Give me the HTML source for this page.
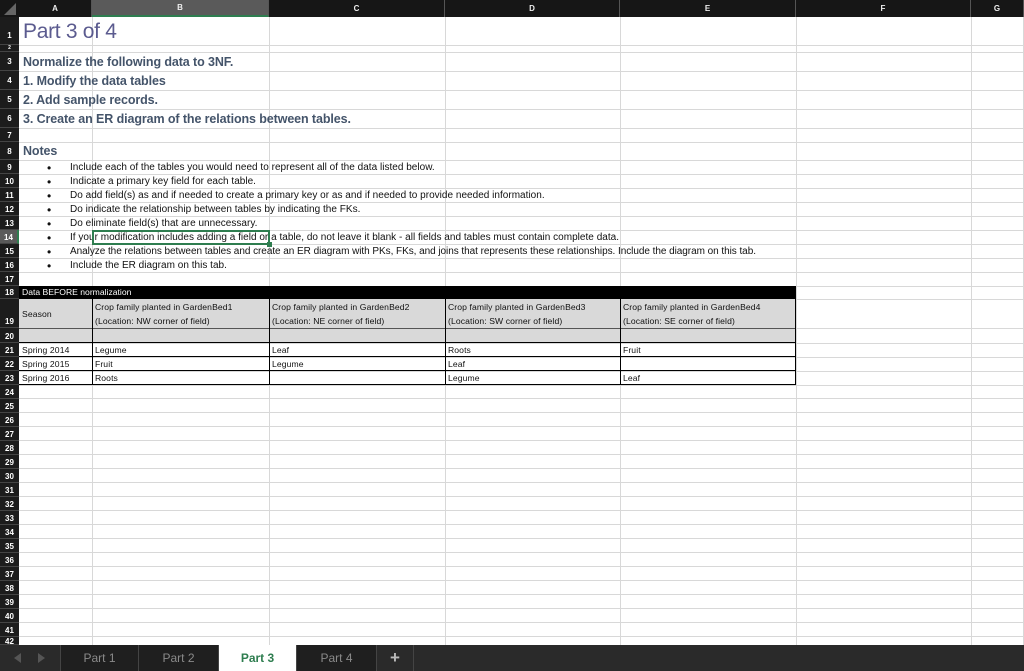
<!DOCTYPE html>
<html><head><meta charset="utf-8"><style>
*{margin:0;padding:0;box-sizing:border-box}
body{width:1024px;height:671px;overflow:hidden;background:#fff;font-family:"Liberation Sans",sans-serif;position:relative}
.a{position:absolute}
.hl{position:absolute;left:19px;width:1005px;height:1px;background:#d8d8d8}
.vl{position:absolute;top:17px;width:1px;height:628px;background:#d8d8d8}
.rn{position:absolute;left:0;width:19px;background:#1c1c1c;color:#fff;font-weight:bold;font-size:8px;text-align:center;border-bottom:1px solid #444;display:flex;align-items:flex-end;justify-content:center;padding-bottom:1px}
.ch{position:absolute;top:0;height:17px;background:#161616;color:#eee;font-size:8px;font-weight:bold;text-align:center;line-height:17px;border-right:1px solid #555}
.h{position:absolute;left:23px;color:#44546a;font-weight:bold;font-size:12.5px;letter-spacing:-0.1px;white-space:nowrap}
.n{position:absolute;left:70px;font-size:10px;letter-spacing:0.02px;color:#111;white-space:nowrap}
.b{position:absolute;left:47px;font-size:12px;line-height:12px;color:#111}
.t{position:absolute;font-size:8.6px;color:#111;white-space:nowrap;letter-spacing:0.1px}
.tab{position:absolute;top:645px;height:26px;line-height:26px;text-align:center;color:#8a8a8a;font-size:12px;border-right:1px solid #444}
</style></head><body>
<div class="vl" style="left:92px"></div><div class="vl" style="left:269px"></div><div class="vl" style="left:445px"></div><div class="vl" style="left:620px"></div><div class="vl" style="left:796px"></div><div class="vl" style="left:971px"></div><div class="vl" style="left:1023px"></div>
<div class="hl" style="top:45px"></div><div class="hl" style="top:52px"></div><div class="hl" style="top:71px"></div><div class="hl" style="top:90px"></div><div class="hl" style="top:109px"></div><div class="hl" style="top:128px"></div><div class="hl" style="top:142px"></div><div class="hl" style="top:160px"></div><div class="hl" style="top:174px"></div><div class="hl" style="top:188px"></div><div class="hl" style="top:202px"></div><div class="hl" style="top:216px"></div><div class="hl" style="top:230px"></div><div class="hl" style="top:244px"></div><div class="hl" style="top:258px"></div><div class="hl" style="top:272px"></div><div class="hl" style="top:286px"></div><div class="hl" style="top:299px"></div><div class="hl" style="top:328px"></div><div class="hl" style="top:343px"></div><div class="hl" style="top:357px"></div><div class="hl" style="top:371px"></div><div class="hl" style="top:385px"></div>
<div class="a" style="left:19px;top:385px;width:1005px;height:260px;background:repeating-linear-gradient(to bottom,transparent 0,transparent 13px,#d8d8d8 13px,#d8d8d8 14px)"></div>
<div class="a" style="left:0;top:0;width:19px;height:17px;background:#161616"><div class="a" style="left:4px;top:3px;width:0;height:0;border-left:12px solid transparent;border-bottom:12px solid #666"></div></div>
<div class="ch" style="left:19px;width:73px">A</div>
<div class="ch" style="left:92px;width:177px;background:#5a5a5a;border-bottom:2px solid #2e7d4f;line-height:16px">B</div>
<div class="ch" style="left:269px;width:176px">C</div>
<div class="ch" style="left:445px;width:175px">D</div>
<div class="ch" style="left:620px;width:176px">E</div>
<div class="ch" style="left:796px;width:175px">F</div>
<div class="ch" style="left:971px;width:53px">G</div>
<div class="rn" style="top:17px;height:28px;padding-bottom:4px">1</div>
<div class="rn" style="top:45px;height:7px;font-size:5px;align-items:flex-start;padding:0">2</div>
<div class="rn" style="top:52px;height:19px;padding-bottom:4px">3</div>
<div class="rn" style="top:71px;height:19px;padding-bottom:4px">4</div>
<div class="rn" style="top:90px;height:19px;padding-bottom:4px">5</div>
<div class="rn" style="top:109px;height:19px;padding-bottom:4px">6</div>
<div class="rn" style="top:128px;height:14px">7</div>
<div class="rn" style="top:142px;height:18px;padding-bottom:3px">8</div>
<div class="rn" style="top:160px;height:14px">9</div>
<div class="rn" style="top:174px;height:14px">10</div>
<div class="rn" style="top:188px;height:14px">11</div>
<div class="rn" style="top:202px;height:14px">12</div>
<div class="rn" style="top:216px;height:14px">13</div>
<div class="rn" style="top:230px;height:14px;background:#5a5a5a;border-right:2px solid #2e7d4f">14</div>
<div class="rn" style="top:244px;height:14px">15</div>
<div class="rn" style="top:258px;height:14px">16</div>
<div class="rn" style="top:272px;height:14px">17</div>
<div class="rn" style="top:286px;height:13px">18</div>
<div class="rn" style="top:299px;height:29px">19</div>
<div class="rn" style="top:328px;height:15px">20</div>
<div class="rn" style="top:343px;height:14px">21</div>
<div class="rn" style="top:357px;height:14px">22</div>
<div class="rn" style="top:371px;height:14px">23</div>
<div class="rn" style="top:385px;height:14px">24</div>
<div class="rn" style="top:399px;height:14px">25</div>
<div class="rn" style="top:413px;height:14px">26</div>
<div class="rn" style="top:427px;height:14px">27</div>
<div class="rn" style="top:441px;height:14px">28</div>
<div class="rn" style="top:455px;height:14px">29</div>
<div class="rn" style="top:469px;height:14px">30</div>
<div class="rn" style="top:483px;height:14px">31</div>
<div class="rn" style="top:497px;height:14px">32</div>
<div class="rn" style="top:511px;height:14px">33</div>
<div class="rn" style="top:525px;height:14px">34</div>
<div class="rn" style="top:539px;height:14px">35</div>
<div class="rn" style="top:553px;height:14px">36</div>
<div class="rn" style="top:567px;height:14px">37</div>
<div class="rn" style="top:581px;height:14px">38</div>
<div class="rn" style="top:595px;height:14px">39</div>
<div class="rn" style="top:609px;height:14px">40</div>
<div class="rn" style="top:623px;height:14px">41</div>
<div class="rn" style="top:637px;height:8px;overflow:hidden;align-items:flex-start;padding:0">42</div>
<div class="a" style="left:23px;top:20px;font-size:21px;color:#5b5b8f;letter-spacing:-0.3px">Part 3 of 4</div>
<div class="h" style="top:55px">Normalize the following data to 3NF.</div>
<div class="h" style="top:74px">1. Modify the data tables</div>
<div class="h" style="top:93px">2. Add sample records.</div>
<div class="h" style="top:112px">3. Create an ER diagram of the relations between tables.</div>
<div class="h" style="top:144px">Notes</div>
<div class="b" style="top:162px">•</div><div class="n" style="top:162px">Include each of the tables you would need to represent all of the data listed below.</div>
<div class="b" style="top:176px">•</div><div class="n" style="top:176px">Indicate a primary key field for each table.</div>
<div class="b" style="top:190px">•</div><div class="n" style="top:190px">Do add field(s) as and if needed to create a primary key or as and if needed to provide needed information.</div>
<div class="b" style="top:204px">•</div><div class="n" style="top:204px">Do indicate the relationship between tables by indicating the FKs.</div>
<div class="b" style="top:218px">•</div><div class="n" style="top:218px">Do eliminate field(s) that are unnecessary.</div>
<div class="b" style="top:232px">•</div><div class="n" style="top:232px">If your modification includes adding a field or a table, do not leave it blank - all fields and tables must contain complete data.</div>
<div class="b" style="top:246px">•</div><div class="n" style="top:246px;letter-spacing:-0.05px">Analyze the relations between tables and create an ER diagram with PKs, FKs, and joins that represents these relationships.  Include the diagram on this tab.</div>
<div class="b" style="top:260px">•</div><div class="n" style="top:260px">Include the ER diagram on this tab.</div>
<div class="a" style="left:92px;top:230px;width:178px;height:15px;border:2px solid #2e7d4f"></div>
<div class="a" style="left:267px;top:242px;width:5px;height:5px;background:#2e7d4f"></div>
<div class="a" style="left:19px;top:286px;width:777px;height:13px;background:#000;color:#fff;font-size:8.6px;line-height:13px;padding-left:3px">Data BEFORE normalization</div>
<div class="a" style="left:19px;top:299px;width:777px;height:44px;background:#d9d9d9"></div>
<div class="a" style="left:19px;top:328px;width:777px;height:1px;background:#555"></div>
<div class="a" style="left:19px;top:342px;width:777px;height:1px;background:#000"></div>
<div class="a" style="left:19px;top:356px;width:777px;height:1px;background:#000"></div>
<div class="a" style="left:19px;top:370px;width:777px;height:1px;background:#000"></div>
<div class="a" style="left:19px;top:384px;width:777px;height:1px;background:#000"></div>
<div class="a" style="left:92px;top:299px;width:1px;height:86px;background:#000"></div>
<div class="a" style="left:269px;top:299px;width:1px;height:86px;background:#000"></div>
<div class="a" style="left:445px;top:299px;width:1px;height:86px;background:#000"></div>
<div class="a" style="left:620px;top:299px;width:1px;height:86px;background:#000"></div>
<div class="a" style="left:795px;top:286px;width:1px;height:99px;background:#000"></div>
<div class="t" style="left:22px;top:309px">Season</div>
<div class="t" style="left:95px;top:302px">Crop family planted in GardenBed1</div><div class="t" style="left:95px;top:316px">(Location: NW corner of field)</div>
<div class="t" style="left:272px;top:302px">Crop family planted in GardenBed2</div><div class="t" style="left:272px;top:316px">(Location: NE corner of field)</div>
<div class="t" style="left:448px;top:302px">Crop family planted in GardenBed3</div><div class="t" style="left:448px;top:316px">(Location: SW corner of field)</div>
<div class="t" style="left:623px;top:302px">Crop family planted in GardenBed4</div><div class="t" style="left:623px;top:316px">(Location: SE corner of field)</div>
<div class="t" style="left:22px;top:345px">Spring 2014</div><div class="t" style="left:95px;top:345px">Legume</div><div class="t" style="left:272px;top:345px">Leaf</div><div class="t" style="left:448px;top:345px">Roots</div><div class="t" style="left:623px;top:345px">Fruit</div>
<div class="t" style="left:22px;top:359px">Spring 2015</div><div class="t" style="left:95px;top:359px">Fruit</div><div class="t" style="left:272px;top:359px">Legume</div><div class="t" style="left:448px;top:359px">Leaf</div>
<div class="t" style="left:22px;top:373px">Spring 2016</div><div class="t" style="left:95px;top:373px">Roots</div><div class="t" style="left:448px;top:373px">Legume</div><div class="t" style="left:623px;top:373px">Leaf</div>
<div class="a" style="left:0;top:645px;width:1024px;height:26px;background:#2a2a2a"></div>
<div class="a" style="left:14px;top:653px;width:0;height:0;border-top:5px solid transparent;border-bottom:5px solid transparent;border-right:7px solid #555"></div>
<div class="a" style="left:38px;top:653px;width:0;height:0;border-top:5px solid transparent;border-bottom:5px solid transparent;border-left:7px solid #555"></div>
<div class="tab" style="left:60px;width:79px;background:#1f1f1f;border-left:1px solid #444">Part 1</div>
<div class="tab" style="left:139px;width:80px;background:#1f1f1f">Part 2</div>
<div class="tab" style="left:219px;width:78px;background:#fff;color:#2e7d4f;font-weight:bold">Part 3</div>
<div class="tab" style="left:297px;width:80px;background:#1f1f1f">Part 4</div>
<div class="tab" style="left:377px;width:37px;color:#bbb;font-size:17px;font-weight:bold">+</div>
</body></html>
